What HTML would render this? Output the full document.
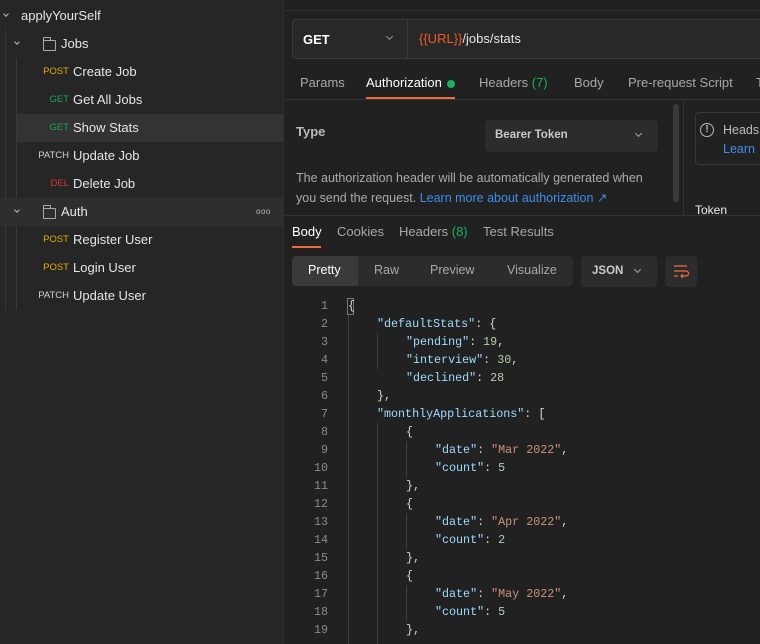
<!DOCTYPE html>
<html><head><style>
*{margin:0;padding:0;box-sizing:border-box}
body{width:760px;height:644px;background:#212121;font-family:"Liberation Sans",sans-serif;overflow:hidden;position:relative;color:#e6e6e6}
.a{position:absolute;white-space:nowrap}
#sb{position:absolute;left:0;top:0;width:284px;height:644px;background:#262626;border-right:1px solid #2f2f2f}
.row{position:absolute;left:0;width:283px;height:28px;line-height:28px;font-size:13px;color:#e6e6e6}
.m{position:absolute;right:214px;font-size:9.5px;top:0;}
.n{position:absolute;left:73px}
.post{color:#e6a800}.get{color:#1aa45a}.del{color:#d43a2f}.patch{color:#d0d0d0}
.chev{position:absolute;width:5px;height:5px;border-right:1.2px solid #bbb;border-bottom:1.2px solid #bbb;transform:rotate(45deg)}
.folder{position:absolute;width:13px;height:11px;border:1.2px solid #aaa;border-radius:1px}
.folder:before{content:"";position:absolute;left:-1px;top:-4px;width:6px;height:3px;border:1.2px solid #aaa;border-bottom:none;border-radius:1px 1px 0 0}
.code{position:absolute;left:290px;top:297px;font-family:"Liberation Mono",monospace;font-size:11.7px;line-height:18px}
.ln{position:absolute;width:38px;text-align:right;color:#8a8a8a}
.k{color:#9cdcfe}.s{color:#ce9178}.num{color:#b5cea8}.p{color:#d4d4d4}
.g{position:absolute;width:1px;background:#404040}
</style></head><body>
<div id="sb">
  <div class="row" style="top:2px"><div class="chev" style="left:4px;top:10px;width:4px;height:4px"></div><span class="a" style="left:21px">applyYourSelf</span></div>
  <div class="a" style="left:5px;top:30px;width:1px;height:280px;background:#383838"></div>
  <div class="a" style="left:16px;top:58px;width:1px;height:140px;background:#383838"></div>
  <div class="a" style="left:16px;top:226px;width:1px;height:84px;background:#383838"></div>
  <div class="row" style="top:30px"><div class="chev" style="left:15px;top:10px;width:4px;height:4px"></div><div class="folder" style="left:43px;top:10px"></div><span class="a" style="left:61px">Jobs</span></div>
  <div class="row" style="top:58px"><span class="m post">POST</span><span class="n">Create Job</span></div>
  <div class="row" style="top:86px"><span class="m get">GET</span><span class="n">Get All Jobs</span></div>
  <div class="row" style="top:114px;left:17px;width:266px;background:#333"></div>
  <div class="row" style="top:114px"><span class="m get">GET</span><span class="n">Show Stats</span></div>
  <div class="row" style="top:142px"><span class="m patch">PATCH</span><span class="n">Update Job</span></div>
  <div class="row" style="top:170px"><span class="m del">DEL</span><span class="n">Delete Job</span></div>
  <div class="row" style="top:198px;background:#2e2e2e"><div class="chev" style="left:15px;top:10px;width:4px;height:4px"></div><div class="folder" style="left:43px;top:10px"></div><span class="a" style="left:61px">Auth</span><span class="a" style="left:256px;font-size:8px;color:#bbb;letter-spacing:0.5px">ooo</span></div>
  <div class="row" style="top:226px"><span class="m post">POST</span><span class="n">Register User</span></div>
  <div class="row" style="top:254px"><span class="m post">POST</span><span class="n">Login User</span></div>
  <div class="row" style="top:282px"><span class="m patch">PATCH</span><span class="n">Update User</span></div>
</div>

<div class="a" style="left:285px;top:10px;width:475px;height:1px;background:#333"></div>
<div class="a" style="left:292px;top:19px;width:480px;height:40px;border:1px solid #3a3a3a;border-radius:4px;background:#282828"></div>
<div class="a" style="left:407px;top:20px;width:1px;height:38px;background:#3a3a3a"></div>
<div class="a" style="left:303px;top:32px;font-size:13px;font-weight:bold;color:#fff">GET</div>
<div class="chev" style="left:387px;top:34px;width:5px;height:5px;border-color:#999"></div>
<div class="a" style="left:419px;top:31px;font-size:13px"><span style="color:#f05a28">{{URL}}</span>/jobs/stats</div>

<div class="a" style="top:75px;left:300px;font-size:13px;color:#a8a8a8">Params</div>
<div class="a" style="top:75px;left:366px;font-size:13px;color:#fff">Authorization</div>
<div class="a" style="left:447px;top:80px;width:8px;height:8px;border-radius:50%;background:#1bb15c"></div>
<div class="a" style="left:366px;top:97px;width:89px;height:2px;background:#f26b3a"></div>
<div class="a" style="top:75px;left:479px;font-size:13px;color:#a8a8a8">Headers <span style="color:#1bb15c">(7)</span></div>
<div class="a" style="top:75px;left:574px;font-size:13px;color:#a8a8a8">Body</div>
<div class="a" style="top:75px;left:628px;font-size:13px;color:#a8a8a8">Pre-request Script</div>
<div class="a" style="top:75px;left:756px;font-size:13px;color:#a8a8a8">T</div>
<div class="a" style="left:285px;top:99px;width:475px;height:1px;background:#333"></div>

<div class="a" style="left:296px;top:124px;font-size:13px;font-weight:bold;color:#bbb">Type</div>
<div class="a" style="left:485px;top:120px;width:173px;height:32px;background:#2c2c2c;border-radius:4px"></div>
<div class="a" style="left:495px;top:129px;font-size:11.5px;font-weight:bold;color:#c8c8c8">Bearer Token</div>
<div class="chev" style="left:636px;top:131px;width:5px;height:5px;border-color:#aaa"></div>
<div class="a" style="left:296px;top:168px;font-size:12.5px;color:#aaa;line-height:20px">The authorization header will be automatically generated when<br>you send the request. <span style="color:#3b8eea">Learn more about authorization ↗</span></div>
<div class="a" style="left:673px;top:104px;width:6px;height:98px;border-radius:3px;background:#3a3a3a"></div>
<div class="a" style="left:683px;top:100px;width:1px;height:115px;background:#333"></div>
<div class="a" style="left:695px;top:112px;width:80px;height:53px;border:1px solid #3a3a3a;border-radius:4px"></div>
<div class="a" style="left:700px;top:123px;width:14px;height:14px;border:1.3px solid #bbb;border-radius:50%;font-size:10px;line-height:12px;text-align:center;color:#bbb;font-weight:bold">!</div>
<div class="a" style="left:723px;top:123px;font-size:12.5px;color:#bbb">Heads</div>
<div class="a" style="left:723px;top:142px;font-size:12.5px;color:#3b8eea">Learn</div>
<div class="a" style="left:695px;top:203px;font-size:12px;color:#eee">Token</div>
<div class="a" style="left:285px;top:215px;width:475px;height:1px;background:#333"></div>

<div class="a" style="top:224px;left:292px;font-size:13px;color:#fff">Body</div>
<div class="a" style="left:292px;top:246px;width:29px;height:2px;background:#f26b3a"></div>
<div class="a" style="top:224px;left:337px;font-size:13px;color:#a8a8a8">Cookies</div>
<div class="a" style="top:224px;left:399px;font-size:13px;color:#a8a8a8">Headers <span style="color:#1bb15c">(8)</span></div>
<div class="a" style="top:224px;left:483px;font-size:13px;color:#a8a8a8">Test Results</div>

<div class="a" style="left:292px;top:256px;width:281px;height:30px;background:#2c2c2c;border-radius:4px"></div>
<div class="a" style="left:292px;top:256px;width:66px;height:30px;background:#3a3a3a;border-radius:4px 0 0 4px"></div>
<div class="a" style="left:308px;top:263px;font-size:12.5px;color:#fff">Pretty</div>
<div class="a" style="left:374px;top:263px;font-size:12.5px;color:#a8a8a8">Raw</div>
<div class="a" style="left:430px;top:263px;font-size:12.5px;color:#a8a8a8">Preview</div>
<div class="a" style="left:507px;top:263px;font-size:12.5px;color:#a8a8a8">Visualize</div>
<div class="a" style="left:581px;top:256px;width:76px;height:31px;background:#2c2c2c;border-radius:4px"></div>
<div class="a" style="left:592px;top:265px;font-size:11.5px;font-weight:bold;color:#ccc">JSON</div>
<div class="chev" style="left:635px;top:267px;width:5px;height:5px;border-color:#aaa"></div>
<div class="a" style="left:665px;top:256px;width:32px;height:31px;background:#2c2c2c;border-radius:4px"></div>
<svg class="a" style="left:672px;top:263px" width="18" height="16" viewBox="0 0 18 16"><path d="M2 3H15M2 8H14a2.5 2.5 0 0 1 0 5H9M11 11l-2 2 2 2M2 13H6" fill="none" stroke="#f26b3a" stroke-width="1.2"/></svg>

<div class="g" style="left:348px;top:315px;height:329px"></div>
<div class="g" style="left:377px;top:333px;height:36px"></div>
<div class="g" style="left:377px;top:423px;height:221px"></div>
<div class="g" style="left:406px;top:441px;height:36px"></div>
<div class="g" style="left:406px;top:513px;height:36px"></div>
<div class="g" style="left:406px;top:585px;height:36px"></div>
<div class="a" style="left:347px;top:298px;width:7px;height:17px;border:1px solid #777"></div>

<div class="code">
<div class="ln" style="top:0">1</div><div class="ln" style="top:18px">2</div><div class="ln" style="top:36px">3</div><div class="ln" style="top:54px">4</div><div class="ln" style="top:72px">5</div><div class="ln" style="top:90px">6</div><div class="ln" style="top:108px">7</div><div class="ln" style="top:126px">8</div><div class="ln" style="top:144px">9</div><div class="ln" style="top:162px">10</div><div class="ln" style="top:180px">11</div><div class="ln" style="top:198px">12</div><div class="ln" style="top:216px">13</div><div class="ln" style="top:234px">14</div><div class="ln" style="top:252px">15</div><div class="ln" style="top:270px">16</div><div class="ln" style="top:288px">17</div><div class="ln" style="top:306px">18</div><div class="ln" style="top:324px">19</div>
<div class="a p" style="left:58px;top:0">{</div>
<div class="a" style="left:87px;top:18px"><span class="k">"defaultStats"</span><span class="p">: {</span></div>
<div class="a" style="left:116px;top:36px"><span class="k">"pending"</span><span class="p">: </span><span class="num">19</span><span class="p">,</span></div>
<div class="a" style="left:116px;top:54px"><span class="k">"interview"</span><span class="p">: </span><span class="num">30</span><span class="p">,</span></div>
<div class="a" style="left:116px;top:72px"><span class="k">"declined"</span><span class="p">: </span><span class="num">28</span></div>
<div class="a p" style="left:87px;top:90px">},</div>
<div class="a" style="left:87px;top:108px"><span class="k">"monthlyApplications"</span><span class="p">: [</span></div>
<div class="a p" style="left:116px;top:126px">{</div>
<div class="a" style="left:145px;top:144px"><span class="k">"date"</span><span class="p">: </span><span class="s">"Mar 2022"</span><span class="p">,</span></div>
<div class="a" style="left:145px;top:162px"><span class="k">"count"</span><span class="p">: </span><span class="num">5</span></div>
<div class="a p" style="left:116px;top:180px">},</div>
<div class="a p" style="left:116px;top:198px">{</div>
<div class="a" style="left:145px;top:216px"><span class="k">"date"</span><span class="p">: </span><span class="s">"Apr 2022"</span><span class="p">,</span></div>
<div class="a" style="left:145px;top:234px"><span class="k">"count"</span><span class="p">: </span><span class="num">2</span></div>
<div class="a p" style="left:116px;top:252px">},</div>
<div class="a p" style="left:116px;top:270px">{</div>
<div class="a" style="left:145px;top:288px"><span class="k">"date"</span><span class="p">: </span><span class="s">"May 2022"</span><span class="p">,</span></div>
<div class="a" style="left:145px;top:306px"><span class="k">"count"</span><span class="p">: </span><span class="num">5</span></div>
<div class="a p" style="left:116px;top:324px">},</div>
</div>
</body></html>
